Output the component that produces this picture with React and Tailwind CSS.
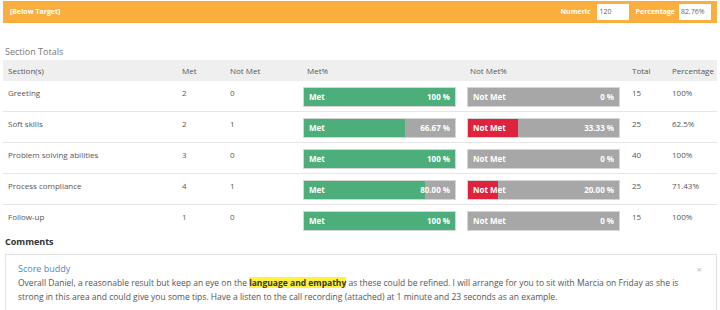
import React from "react";

const rows = [
  { name: "Greeting", met: 2, notMet: 0, metPct: 100, metLabel: "100 %", notLabel: "0 %", total: 15, pct: "100%" },
  { name: "Soft skills", met: 2, notMet: 1, metPct: 66.67, metLabel: "66.67 %", notLabel: "33.33 %", total: 25, pct: "62.5%" },
  { name: "Problem solving abilities", met: 3, notMet: 0, metPct: 100, metLabel: "100 %", notLabel: "0 %", total: 40, pct: "100%" },
  { name: "Process compliance", met: 4, notMet: 1, metPct: 80, metLabel: "80.00 %", notLabel: "20.00 %", total: 25, pct: "71.43%" },
  { name: "Follow-up", met: 1, notMet: 0, metPct: 100, metLabel: "100 %", notLabel: "0 %", total: 15, pct: "100%" },
];

const cols = "grid grid-cols-[175px_48px_76px_164px_162px_40px_1fr]";

const Bar = ({ fill, color, label, value }) => (
  <div className="relative ml-px h-[20px] w-[153px] bg-[#a7a7a7] border border-[#d6d6d6]">
    {/* fill width comes from data */}
    <div className={`absolute inset-y-0 left-0 ${color}`} style={{ width: `${fill}%` }} />
    <div className="relative flex h-full items-center justify-between px-[5px] text-[8px] font-bold text-white">
      <span>{label}</span>
      <span>{value}</span>
    </div>
  </div>
);

export default function App() {
  return (
    <div className="w-[720px] h-[310px] overflow-hidden bg-white font-['Open_Sans',sans-serif] text-[#555]">
      {/* status header */}
      <div className="mx-[3px] mt-px flex h-[22px] items-center justify-between bg-[#f9ae3e] pl-[7px] pr-[6px]">
        <span className="text-[7px] font-bold text-white">[Below Target]</span>
        <div className="flex items-center">
          <span className="mr-[6px] text-[7px] font-bold text-white">Numeric</span>
          <div className="flex h-[16px] w-[32px] items-center bg-white pl-[3px] text-[7px] text-[#666]">120</div>
          <span className="ml-[7px] mr-[4px] text-[7px] font-bold text-white">Percentage</span>
          <div className="flex h-[16px] w-[32px] items-center bg-white pl-[2px] text-[7px] text-[#666]">82.76%</div>
        </div>
      </div>

      <div className="mt-[23px] pl-[5px] text-[9px] leading-[12px] text-[#777]">Section Totals</div>

      <div className="mx-[3px] mt-[2px]">
        <div className={`${cols} h-[21px] items-center bg-[#efefef] text-[8px]`}>
          <div className="pl-[5px]">Section(s)</div>
          <div className="pl-[4px]">Met</div>
          <div className="pl-[4px]">Not Met</div>
          <div className="pl-[5px]">Met%</div>
          <div className="pl-[4px]">Not Met%</div>
          <div className="pl-[4px]">Total</div>
          <div className="pl-[4px]">Percentage</div>
        </div>
        {rows.map((r, i) => (
          <div
            key={r.name}
            className={`${cols} h-[31px] pt-[6px] text-[8px] leading-[10px] ${i < rows.length - 1 ? "border-b border-[#e6e6e6]" : ""}`}
          >
            <div className="pl-[5px] pt-[1px]">{r.name}</div>
            <div className="pl-[4px] pt-[1px]">{r.met}</div>
            <div className="pl-[4px] pt-[1px]">{r.notMet}</div>
            <div>
              <Bar fill={r.metPct} color="bg-[#4cae7a]" label="Met" value={r.metLabel} />
            </div>
            <div>
              <Bar fill={100 - r.metPct} color="bg-[#e0233d]" label="Not Met" value={r.notLabel} />
            </div>
            <div className="pl-[4px] pt-[1px]">{r.total}</div>
            <div className="pl-[4px] pt-[1px]">{r.pct}</div>
          </div>
        ))}
      </div>

      <div className="pl-[5px] text-[9px] font-bold leading-[12px] text-[#333]">Comments</div>

      <div className="relative mx-[3px] mt-[6px] ml-[5px] h-[80px] border border-[#e2e2e2] pl-[12px] pr-[10px] pt-[7px] text-[8.5px] leading-[14px]">
        <span className="absolute right-[14px] top-[8px] text-[9px] text-[#bbb]">×</span>
        <div className="text-[#4d8ab8] text-[9px]">Score buddy</div>
        <p>
          Overall Daniel, a reasonable result but keep an eye on the{" "}
          <span className="bg-[#fff23a] font-bold text-[#333]">language and empathy</span> as these could be
          refined. I will arrange for you to sit with Marcia on Friday as she is strong in this area and could give you
          some tips. Have a listen to the call recording (attached) at 1 minute and 23 seconds as an example.
        </p>
      </div>
    </div>
  );
}
